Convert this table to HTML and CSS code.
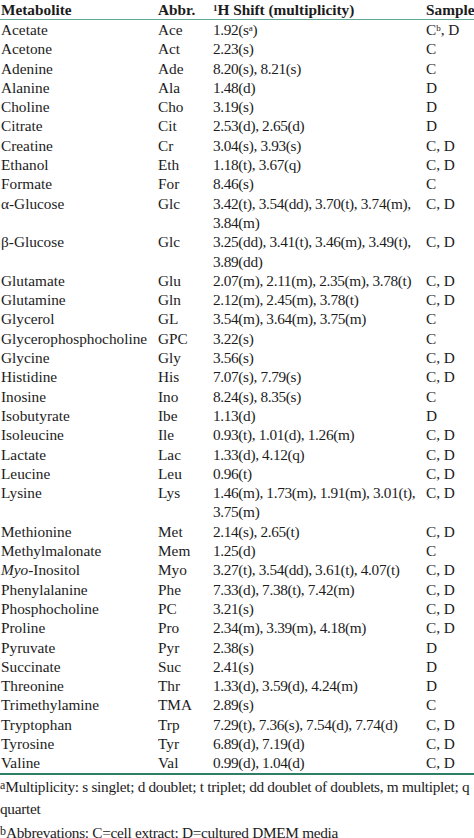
FILE: index.html
```html
<!DOCTYPE html>
<html lang="en">
<head>
<meta charset="utf-8">
<title>Metabolites</title>
<link rel="stylesheet" href="styles.css">
</head>
<body>
<div class="page">
<table class="tbl">
<colgroup><col class="c1"><col class="c2"><col class="c3"><col class="c4"></colgroup>
<thead>
<tr><th>Metabolite</th><th>Abbr.</th><th><sup class="hs">1</sup>H Shift (multiplicity)</th><th>Sample</th></tr>
</thead>
<tbody>
<tr><td>Acetate</td><td>Ace</td><td class="sh">1.92(s<sup class="sm">a</sup>)</td><td>C<sup class="sm">b</sup>, D</td></tr>
<tr><td>Acetone</td><td>Act</td><td class="sh">2.23(s)</td><td>C</td></tr>
<tr><td>Adenine</td><td>Ade</td><td class="sh">8.20(s), 8.21(s)</td><td>C</td></tr>
<tr><td>Alanine</td><td>Ala</td><td class="sh">1.48(d)</td><td>D</td></tr>
<tr><td>Choline</td><td>Cho</td><td class="sh">3.19(s)</td><td>D</td></tr>
<tr><td>Citrate</td><td>Cit</td><td class="sh">2.53(d), 2.65(d)</td><td>D</td></tr>
<tr><td>Creatine</td><td>Cr</td><td class="sh">3.04(s), 3.93(s)</td><td>C, D</td></tr>
<tr><td>Ethanol</td><td>Eth</td><td class="sh">1.18(t), 3.67(q)</td><td>C, D</td></tr>
<tr><td>Formate</td><td>For</td><td class="sh">8.46(s)</td><td>C</td></tr>
<tr><td>α-Glucose</td><td>Glc</td><td class="sh">3.42(t), 3.54(dd), 3.70(t), 3.74(m),<br>3.84(m)</td><td>C, D</td></tr>
<tr><td>β-Glucose</td><td>Glc</td><td class="sh">3.25(dd), 3.41(t), 3.46(m), 3.49(t),<br>3.89(dd)</td><td>C, D</td></tr>
<tr><td>Glutamate</td><td>Glu</td><td class="sh">2.07(m), 2.11(m), 2.35(m), 3.78(t)</td><td>C, D</td></tr>
<tr><td>Glutamine</td><td>Gln</td><td class="sh">2.12(m), 2.45(m), 3.78(t)</td><td>C, D</td></tr>
<tr><td>Glycerol</td><td>GL</td><td class="sh">3.54(m), 3.64(m), 3.75(m)</td><td>C</td></tr>
<tr><td>Glycerophosphocholine</td><td>GPC</td><td class="sh">3.22(s)</td><td>C</td></tr>
<tr><td>Glycine</td><td>Gly</td><td class="sh">3.56(s)</td><td>C, D</td></tr>
<tr><td>Histidine</td><td>His</td><td class="sh">7.07(s), 7.79(s)</td><td>C, D</td></tr>
<tr><td>Inosine</td><td>Ino</td><td class="sh">8.24(s), 8.35(s)</td><td>C</td></tr>
<tr><td>Isobutyrate</td><td>Ibe</td><td class="sh">1.13(d)</td><td>D</td></tr>
<tr><td>Isoleucine</td><td>Ile</td><td class="sh">0.93(t), 1.01(d), 1.26(m)</td><td>C, D</td></tr>
<tr><td>Lactate</td><td>Lac</td><td class="sh">1.33(d), 4.12(q)</td><td>C, D</td></tr>
<tr><td>Leucine</td><td>Leu</td><td class="sh">0.96(t)</td><td>C, D</td></tr>
<tr><td>Lysine</td><td>Lys</td><td class="sh">1.46(m), 1.73(m), 1.91(m), 3.01(t),<br>3.75(m)</td><td>C, D</td></tr>
<tr><td>Methionine</td><td>Met</td><td class="sh">2.14(s), 2.65(t)</td><td>C, D</td></tr>
<tr><td>Methylmalonate</td><td>Mem</td><td class="sh">1.25(d)</td><td>C</td></tr>
<tr><td><i>Myo</i>-Inositol</td><td>Myo</td><td class="sh">3.27(t), 3.54(dd), 3.61(t), 4.07(t)</td><td>C, D</td></tr>
<tr><td>Phenylalanine</td><td>Phe</td><td class="sh">7.33(d), 7.38(t), 7.42(m)</td><td>C, D</td></tr>
<tr><td>Phosphocholine</td><td>PC</td><td class="sh">3.21(s)</td><td>C, D</td></tr>
<tr><td>Proline</td><td>Pro</td><td class="sh">2.34(m), 3.39(m), 4.18(m)</td><td>C, D</td></tr>
<tr><td>Pyruvate</td><td>Pyr</td><td class="sh">2.38(s)</td><td>D</td></tr>
<tr><td>Succinate</td><td>Suc</td><td class="sh">2.41(s)</td><td>D</td></tr>
<tr><td>Threonine</td><td>Thr</td><td class="sh">1.33(d), 3.59(d), 4.24(m)</td><td>D</td></tr>
<tr><td>Trimethylamine</td><td>TMA</td><td class="sh">2.89(s)</td><td>C</td></tr>
<tr><td>Tryptophan</td><td>Trp</td><td class="sh">7.29(t), 7.36(s), 7.54(d), 7.74(d)</td><td>C, D</td></tr>
<tr><td>Tyrosine</td><td>Tyr</td><td class="sh">6.89(d), 7.19(d)</td><td>C, D</td></tr>
<tr><td>Valine</td><td>Val</td><td class="sh">0.99(d), 1.04(d)</td><td>C, D</td></tr>
</tbody>
</table>
<div class="notes">
<p class="note"><sup class="fm">a</sup>Multiplicity: s singlet; d doublet; t triplet; dd doublet of doublets, m multiplet; q quartet</p>
<p class="note"><sup class="fm">b</sup>Abbrevations: C=cell extract; D=cultured DMEM media</p>
</div>
</div>
</body>
</html>
```
FILE: styles.css
```css
html, body {
  margin: 0;
  padding: 0;
  background: #ffffff;
}
body {
  overflow: hidden;
  font-family: "Liberation Serif", "Times New Roman", serif;
  font-size: 15.3px;
  color: #1c1c1c;
}
.page {
  width: 474px;
  overflow: hidden;
}
.tbl {
  border-collapse: collapse;
  table-layout: fixed;
  width: 500px;
}
.c1 { width: 158px; }
.c2 { width: 55px; }
.c3 { width: 213px; }
.c4 { width: 74px; }
.tbl th,
.tbl td {
  padding: 0;
  text-align: left;
  vertical-align: top;
  line-height: 19.3px;
  white-space: nowrap;
}
.tbl th {
  font-weight: bold;
  border-bottom: 1px solid #5fa894;
  line-height: 19px;
}
.tbl .sh {
  letter-spacing: -0.35px;
}
.tbl tbody tr:last-child td {
  border-bottom: 2px solid #2e7f66;
}
.tbl td:first-child,
.tbl th:first-child {
  padding-left: 1px;
}
.hs, .sm {
  font-size: 9px;
  line-height: 0;
  vertical-align: 4px;
}
.notes {
  padding: 1px 0 0 0;
}
.note {
  margin: 0 0 2px 0;
  line-height: 22px;
  letter-spacing: -0.3px;
}
.note + .note {
  margin-bottom: 0;
  line-height: 21px;
}
.fm {
  font-size: 12px;
  line-height: 0;
  vertical-align: 3px;
  letter-spacing: 0;
}
```
